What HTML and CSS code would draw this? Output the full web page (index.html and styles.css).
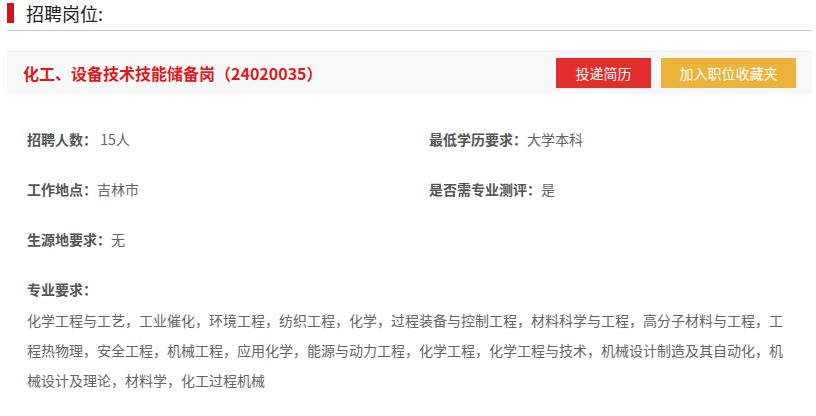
FILE: index.html
```html
<!DOCTYPE html>
<html lang="zh-CN">
<head>
<meta charset="utf-8">
<title>招聘岗位</title>
<link rel="stylesheet" href="styles.css">
</head>
<body>
<div class="page">
  <div class="sec-head">
    <span class="sec-bar"></span>
    <h2 class="sec-title">招聘岗位:</h2>
  </div>
  <div class="job">
    <div class="job-head">
      <h3 class="job-title">化工、设备技术技能储备岗（24020035）</h3>
      <div class="actions">
        <button class="btn btn-red">投递简历</button>
        <button class="btn btn-yellow">加入职位收藏夹</button>
      </div>
    </div>
    <div class="job-body">
      <div class="info-grid">
        <div class="info"><span class="label">招聘人数：</span><span class="value"> 15人</span></div>
        <div class="info"><span class="label">最低学历要求：</span><span class="value">大学本科</span></div>
        <div class="info"><span class="label">工作地点：</span><span class="value">吉林市</span></div>
        <div class="info"><span class="label">是否需专业测评：</span><span class="value">是</span></div>
        <div class="info"><span class="label">生源地要求：</span><span class="value">无</span></div>
      </div>
      <div class="major">
        <div class="label major-label">专业要求：</div>
        <p class="major-text">化学工程与工艺，工业催化，环境工程，纺织工程，化学，过程装备与控制工程，材料科学与工程，高分子材料与工程，工程热物理，安全工程，机械工程，应用化学，能源与动力工程，化学工程，化学工程与技术，机械设计制造及其自动化，机械设计及理论，材料学，化工过程机械</p>
      </div>
    </div>
  </div>
</div>
</body>
</html>
```

FILE: styles.css
```css
* { box-sizing: border-box; }
html, body { margin: 0; padding: 0; background: #fff; }
body {
  font-family: "Noto Sans CJK SC", "Noto Sans", sans-serif;
  font-size: 14px;
  color: #666;
}
.page {
  width: 805px;
  margin-left: 7px;
}
.sec-head {
  display: flex;
  align-items: center;
  height: 31px;
  padding-bottom: 5px;
  border-bottom: 1px solid #cccccc;
}
.sec-bar {
  width: 7px;
  height: 20px;
  background: #d3121a;
}
.sec-title {
  margin: 0 0 0 12px;
  font-size: 18px;
  font-weight: normal;
  color: #222;
  line-height: 26px;
}
.job {
  margin-top: 20px;
}
.job-head {
  display: flex;
  align-items: center;
  justify-content: space-between;
  height: 43px;
  padding: 0 16px;
  background: #f8f8f8;
  border-top: 1px solid #ececec;
}
.job-title {
  margin: 0;
  font-size: 16px;
  font-weight: bold;
  color: #e01b1f;
}
.actions {
  display: flex;
  gap: 10px;
}
.btn {
  height: 30px;
  border: 0;
  padding: 0;
  font-family: inherit;
  font-size: 14px;
  color: #fff;
  cursor: pointer;
}
.btn-red { width: 95px; background: #e32d2d; }
.btn-yellow { width: 135px; background: #ecb33a; }
.job-body {
  padding: 20px 20px 0;
}
.info-grid {
  display: grid;
  grid-template-columns: 402px 1fr;
}
.info {
  height: 50px;
  line-height: 50px;
}
.label {
  font-weight: bold;
  color: #555;
}
.value {
  color: #666;
  white-space: pre;
}
.major {
  margin-top: 10px;
}
.major-label {
  line-height: 30px;
}
.major-text {
  margin: 1px 0 0;
  line-height: 30px;
  color: #666;
}
```
